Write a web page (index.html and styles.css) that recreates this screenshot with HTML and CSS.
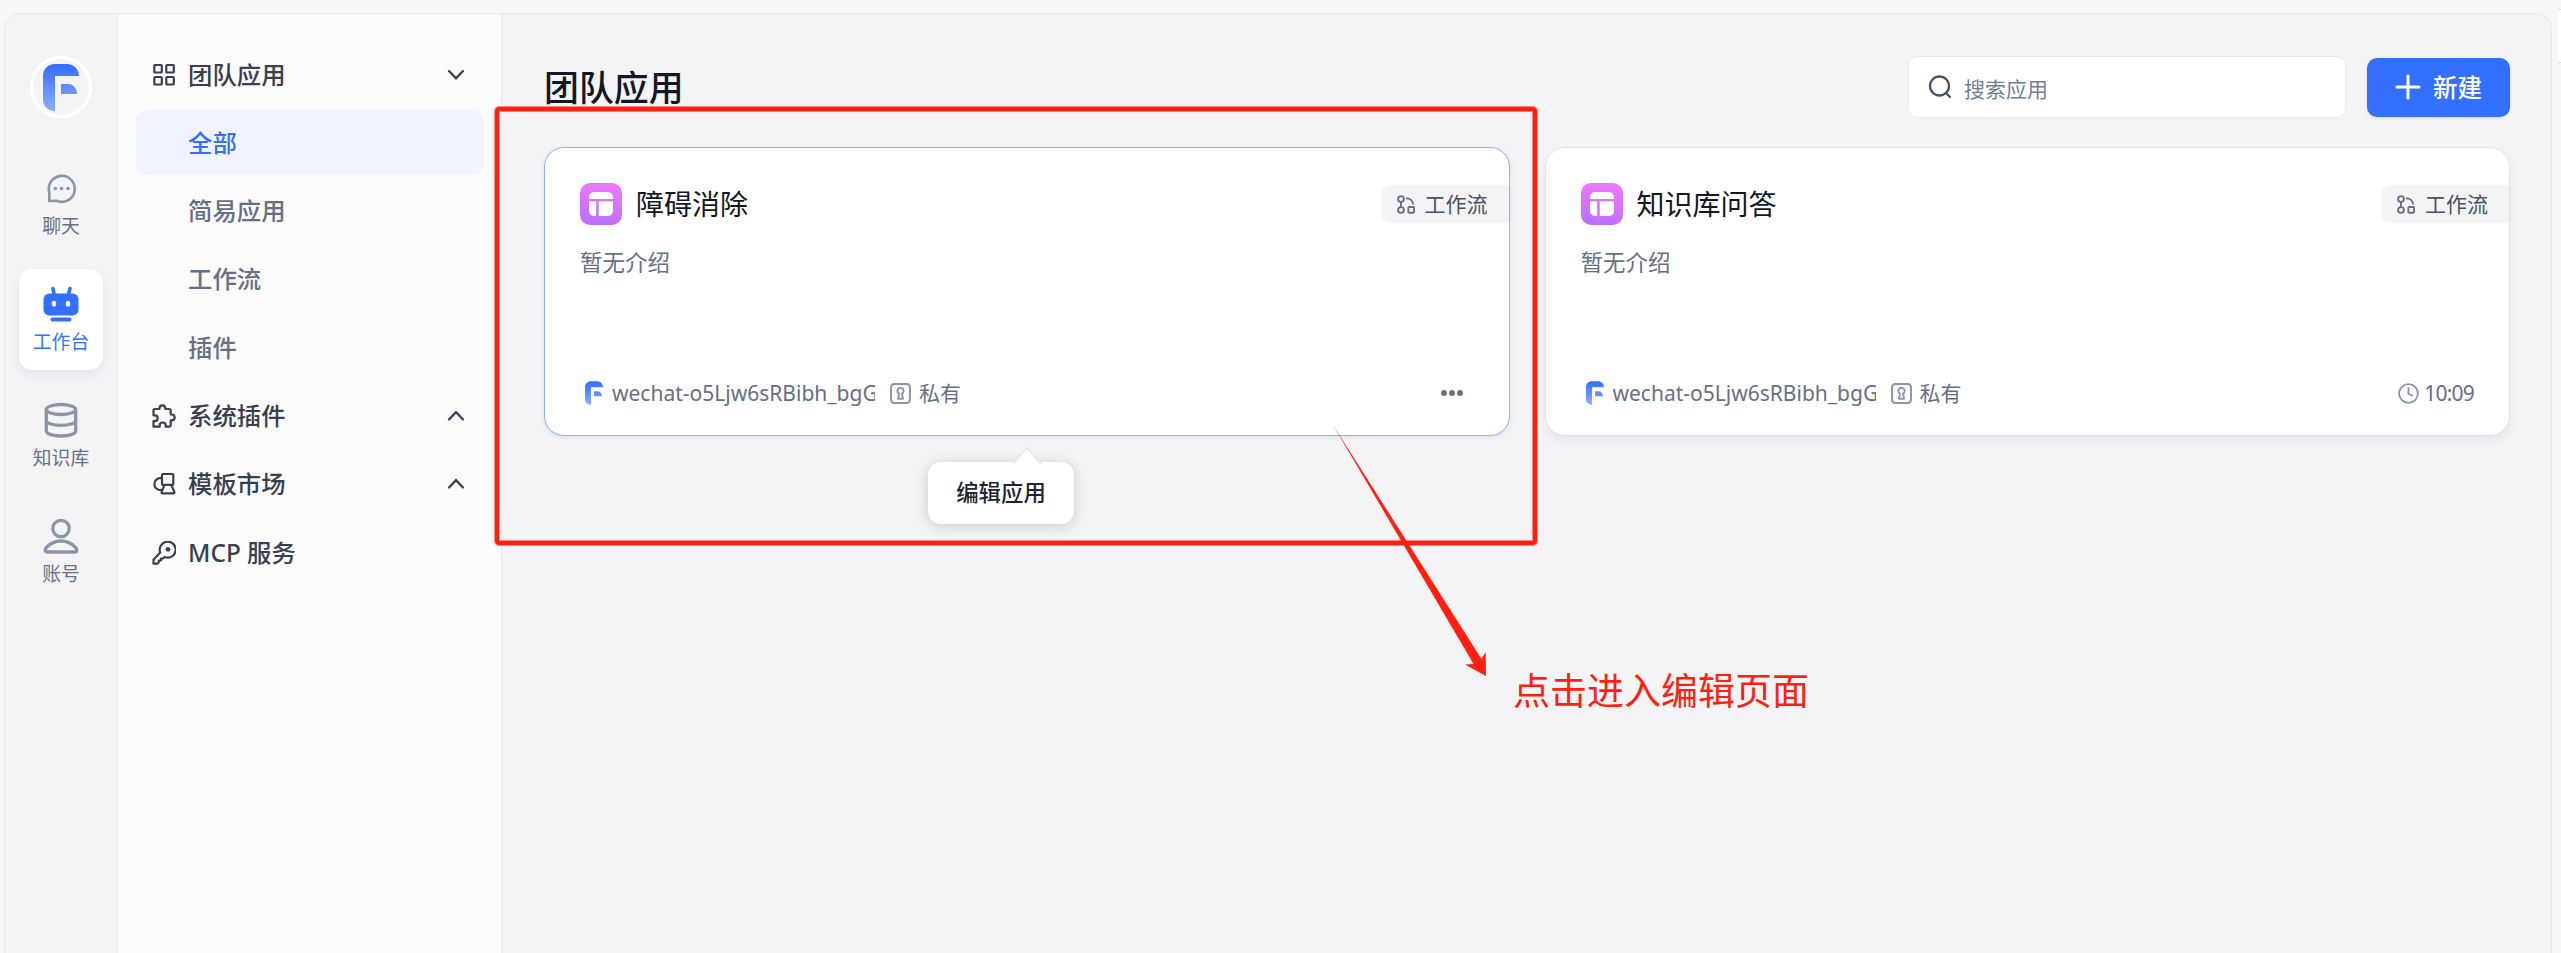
FILE: index.html
```html
<!DOCTYPE html>
<html lang="zh-CN">
<head>
  <meta charset="UTF-8">
  <title>团队应用</title>
  <link rel="stylesheet" href="styles.css">
</head>
<body>

  <!-- shared symbols -->
  <svg class="defs" width="0" height="0">
    <defs>
      <linearGradient id="blueGrad" x1="0" y1="0" x2="0" y2="1">
        <stop offset="0" stop-color="#326dff"/>
        <stop offset="1" stop-color="#8eaeff"/>
      </linearGradient>
      <linearGradient id="pinkGrad" x1="0.6" y1="0" x2="0.4" y2="1">
        <stop offset="0" stop-color="#ee78ff"/>
        <stop offset="1" stop-color="#bc70ff"/>
      </linearGradient>
    </defs>
    <symbol id="logo" viewBox="0 0 36 47">
      <path fill="url(#blueGrad)" d="M0 12C0 5 5 0 12 0H24C31 0 36 5 36 12H12V47C5 47 0 42 0 36ZM18 20H25C30 20 34 24 34 30H18Z"/>
    </symbol>
    <symbol id="flow" viewBox="0 0 18 19">
      <g fill="none" stroke="currentColor" stroke-width="1.9">
        <circle cx="4" cy="4" r="2.9"/>
        <circle cx="4" cy="15" r="2.9"/>
        <path d="M4 7V12M9 3.2C13 3.2 16 5.5 16 9.6"/>
        <rect x="11.3" y="12" width="5.8" height="5.8" rx="1"/>
      </g>
    </symbol>
    <symbol id="lock" viewBox="0 0 20 20">
      <rect x="1" y="1" width="18" height="18" rx="3" fill="none" stroke="currentColor" stroke-width="1.9"/>
      <path d="M8.6 10.2A3 3 0 1 1 11.4 10.2L12.4 15H7.6Z" fill="none" stroke="currentColor" stroke-width="1.8" stroke-linejoin="round"/>
    </symbol>
    <symbol id="appIcon" viewBox="0 0 42 42">
      <rect width="42" height="42" rx="10" fill="url(#pinkGrad)"/>
      <path fill="#fff" d="M9 16V14.5C9 11.2 11.2 9 14.5 9H27.5C30.8 9 33 11.2 33 14.5V16ZM9 18.2H16.2V33H14.5C11.2 33 9 30.8 9 27.5ZM18.7 18.2H33V27.5C33 30.8 30.8 33 27.5 33H18.7Z"/>
    </symbol>
  </svg>

  <div class="layout">
    <nav class="rail">
      <div class="avatar"><svg width="36" height="47"><use href="#logo"/></svg></div>

      <div class="rail-item">
        <svg width="36" height="36" viewBox="0 0 36 36">
          <path d="M6.3 31V22.5A13 13 0 1 1 13.5 30.7Z" fill="none" stroke="#8a95a7" stroke-width="2.6" stroke-linejoin="round"/>
          <g fill="#8a95a7"><circle cx="12.3" cy="18.5" r="1.8"/><circle cx="18.5" cy="18.5" r="1.8"/><circle cx="25" cy="18.5" r="1.8"/></g>
        </svg>
        <span>聊天</span>
      </div>

      <div class="rail-item active">
        <svg width="36" height="36" viewBox="0 0 36 36">
          <g fill="#3370ff">
            <rect x="0.5" y="7.5" width="35" height="22" rx="6"/>
            <rect x="7.5" y="31.5" width="21" height="4" rx="1.8"/>
          </g>
          <path d="M10 2.500L11 8M27 2.500L25.500 8" stroke="#3370ff" stroke-width="3.6" stroke-linecap="round"/>
          <g fill="#fff"><ellipse cx="11" cy="17.7" rx="2.2" ry="3"/><ellipse cx="25" cy="17.7" rx="2.2" ry="3"/></g>
        </svg>
        <span>工作台</span>
      </div>

      <div class="rail-item">
        <svg width="36" height="36" viewBox="0 0 36 36">
          <g fill="none" stroke="#8a95a7" stroke-width="3.3">
            <ellipse cx="18" cy="7.5" rx="14.7" ry="5"/>
            <path d="M3.3 7.5V29C3.3 32 9.9 34 18 34S32.7 32 32.7 29V7.5M3.3 18.5C3.3 21.300 9.900 23.300 18 23.300S32.700 21.300 32.700 18.500"/>
          </g>
        </svg>
        <span>知识库</span>
      </div>

      <div class="rail-item">
        <svg width="36" height="36" viewBox="0 0 36 36">
          <g fill="none" stroke="#8a95a7" stroke-width="3.3">
            <circle cx="18" cy="10.5" r="8.2"/>
            <path d="M4 34C1.5 34 2 31 3.5 29.3C7.5 25.2 12.5 23 18 23S28.5 25.2 32.5 29.3C34 31 34.5 34 32 34Z" stroke-linejoin="round"/>
          </g>
        </svg>
        <span>账号</span>
      </div>
    </nav>

    <aside class="menu">
      <div class="menu-item">
        <svg class="menu-icon" viewBox="0 0 24 24">
          <g fill="none" stroke="currentColor" stroke-width="2.2">
            <rect x="2.3" y="2" width="7.5" height="7.5" rx="0.8"/><rect x="14.3" y="2" width="7.5" height="7.5" rx="0.8"/>
            <rect x="2.3" y="14" width="7.5" height="7.5" rx="0.8"/><rect x="14.3" y="14" width="7.5" height="7.5" rx="0.8"/>
          </g>
        </svg>
        <span>团队应用</span>
        <svg class="chevron" viewBox="0 0 18 12"><path d="M2 2L9 9.3L16 2"/></svg>
      </div>
      <div class="menu-item sub selected"><span>全部</span></div>
      <div class="menu-item sub"><span>简易应用</span></div>
      <div class="menu-item sub"><span>工作流</span></div>
      <div class="menu-item sub"><span>插件</span></div>
      <div class="menu-item">
        <svg class="menu-icon" viewBox="0 0 24 24">
          <path d="M1.5 6.5Q1.500 5 3 5H7.500V4.200A2.900 2.900 0 0 1 13.300 4.200V5H17Q18.700 5 18.700 6.700V10.500H19.700A2.900 2.900 0 0 1 19.700 16.300H18.700V21Q18.700 22.700 17 22.700H13.700V21.500A3 3 0 0 0 7.700 21.500V22.700H1.500V17H2.800A2.700 2.700 0 0 0 2.800 11.300H1.500Z" fill="none" stroke="currentColor" stroke-width="2.2" stroke-linejoin="round"/>
        </svg>
        <span>系统插件</span>
        <svg class="chevron" viewBox="0 0 18 12"><path d="M2 9.500L9 2.200L16 9.500"/></svg>
      </div>
      <div class="menu-item">
        <svg class="menu-icon" viewBox="0 0 24 24">
          <g fill="none" stroke="currentColor" stroke-width="2.2" stroke-linejoin="round">
            <rect x="10" y="2" width="11.3" height="10.8" rx="0.8"/>
            <path d="M9.5 6.300A5.900 5.900 0 1 0 10.500 17.500M12.500 12.800L9.700 19.800Q9.300 21.300 10.500 21.300H21.500Q22.700 21.300 22.300 19.800L19.200 12.800"/>
          </g>
        </svg>
        <span>模板市场</span>
        <svg class="chevron" viewBox="0 0 18 12"><path d="M2 9.500L9 2.200L16 9.500"/></svg>
      </div>
      <div class="menu-item">
        <svg class="menu-icon" viewBox="0 0 24 24">
          <path d="M8.2 11.500A8 8 0 1 1 12.500 16L11 17.500H9V19.500H6.800V21.300L5.300 22.700H1.500V18.700Z" fill="none" stroke="currentColor" stroke-width="2.2" stroke-linejoin="round"/>
          <circle cx="16" cy="8.3" r="2.4" fill="currentColor"/>
        </svg>
        <span>MCP 服务</span>
      </div>
    </aside>

    <main class="content">
      <header class="topbar">
        <h1>团队应用</h1>
        <div class="search">
          <svg width="24" height="24" viewBox="0 0 24 24"><path d="M18 18L22 22M21 11A9.500 9.500 0 1 1 2 11A9.500 9.500 0 1 1 21 11Z" fill="none" stroke="#485264" stroke-width="2.3" stroke-linecap="round"/></svg>
          <span>搜索应用</span>
        </div>
        <button class="create">
          <svg width="26" height="26" viewBox="0 0 26 26"><path d="M13 2V24M2 13H24" stroke="#fff" stroke-width="3" stroke-linecap="round"/></svg>
          <span>新建</span>
        </button>
      </header>

      <div class="cards">
        <div class="card hover">
          <div class="card-head">
            <svg width="42" height="42"><use href="#appIcon"/></svg>
            <span class="name">障碍消除</span>
            <span class="tag"><svg width="18" height="19"><use href="#flow"/></svg><span>工作流</span></span>
          </div>
          <p class="intro">暂无介绍</p>
          <div class="card-foot">
            <svg class="owner-logo" width="18" height="24"><use href="#logo"/></svg>
            <span class="owner">wechat-o5Ljw6sRBibh_bgG</span>
            <svg class="lock" width="21" height="21"><use href="#lock"/></svg>
            <span class="scope">私有</span>
            <svg class="more" width="24" height="8" viewBox="0 0 24 8"><g fill="#667085"><circle cx="4" cy="4" r="2.9"/><circle cx="12" cy="4" r="2.9"/><circle cx="20" cy="4" r="2.9"/></g></svg>
          </div>
          <div class="tooltip">编辑应用
            <svg class="tooltip-arrow" width="28" height="17" viewBox="0 0 28 17"><path d="M0 17L14 1L28 17" fill="#fff" stroke="#e6e6e9" stroke-width="1.5"/></svg>
          </div>
        </div>

        <div class="card">
          <div class="card-head">
            <svg width="42" height="42"><use href="#appIcon"/></svg>
            <span class="name">知识库问答</span>
            <span class="tag"><svg width="18" height="19"><use href="#flow"/></svg><span>工作流</span></span>
          </div>
          <p class="intro">暂无介绍</p>
          <div class="card-foot">
            <svg class="owner-logo" width="18" height="24"><use href="#logo"/></svg>
            <span class="owner">wechat-o5Ljw6sRBibh_bgG</span>
            <svg class="lock" width="21" height="21"><use href="#lock"/></svg>
            <span class="scope">私有</span>
            <span class="time">
              <svg width="21" height="21" viewBox="0 0 21 21"><path d="M10.500 5V11L14.300 12.700" fill="none" stroke="#8a95a7" stroke-width="1.9" stroke-linecap="round"/><circle cx="10.5" cy="10.5" r="9.4" fill="none" stroke="#8a95a7" stroke-width="1.9"/></svg>
              10:09
            </span>
          </div>
        </div>
      </div>
    </main>
  </div>

  <div class="edge"></div>

  <!-- red marks over the page -->
  <div class="mark-box"></div>
  <svg class="mark-arrow" width="160" height="256" viewBox="0 0 160 256">
    <path fill="#ff1f10" d="M3 0L151.4 233.7L155.7 227L156 251L135 239.5L143.6 239Z"/>
  </svg>
  <div class="mark-text">点击进入编辑页面</div>

</body>
</html>
```
FILE: styles.css
```css
* {
  box-sizing: border-box;
}
body {
  margin: 0;
  height: 953px;
  overflow: hidden;
  position: relative;
  background: #f7f7f7;
  font-family: "Noto Sans", "Noto Sans CJK SC", sans-serif;
  color: #111824;
}
svg {
  display: block;
  flex-shrink: 0;
}
.defs {
  position: absolute;
}
.layout {
  display: flex;
  height: 960px;
  margin: 13px 9px 0 4px;
  border: 1px solid #e8e9eb;
  border-radius: 16px 16px 0 0;
  background: #f4f4f7;
  overflow: hidden;
}

/* left rail */
.rail {
  width: 113px;
  padding-top: 42px;
  border-right: 1px solid #e8eaee;
  display: flex;
  flex-direction: column;
  align-items: center;
  gap: 15px;
}
.avatar {
  width: 62px;
  height: 62px;
  margin-bottom: 20px;
  border: 3px solid #fff;
  border-radius: 50%;
  display: flex;
  justify-content: center;
  align-items: center;
}
.rail-item {
  width: 84px;
  height: 101px;
  padding-top: 17px;
  border-radius: 14px;
  display: flex;
  flex-direction: column;
  align-items: center;
  font-size: 18.8px;
  line-height: 24px;
  color: #667085;
  gap: 8px;
}
.rail-item.active {
  background: #fff;
  color: #3370ff;
  box-shadow: 0 4px 10px rgba(19, 51, 107, 0.08);
}

/* app menu */
.menu {
  width: 384px;
  padding: 28px 17px 0 18px;
  background: #fbfbfc;
  border-right: 1px solid #e8ebf0;
  display: flex;
  flex-direction: column;
  gap: 3.3px;
}
.menu-item {
  height: 65px;
  padding: 0 19px 0 16px;
  border-radius: 12px;
  display: flex;
  align-items: center;
  font-size: 24.4px;
  font-weight: 500;
  color: #383f50;
}
.menu-item span {
  margin-bottom: 3px;
}
.menu-icon {
  width: 24px;
  height: 24px;
  margin-right: 12px;
}
.menu-item.sub {
  padding-left: 52px;
  color: #667085;
}
.menu-item.selected {
  background: #f0f4ff;
  color: #3370ff;
}
.chevron {
  width: 18px;
  height: 12px;
  margin-left: auto;
  fill: none;
  stroke: #383f50;
  stroke-width: 2.3;
  stroke-linecap: round;
}

/* content */
.content {
  flex: 1;
  padding: 42px 41px 0 42px;
}
.topbar {
  display: flex;
  align-items: center;
  height: 62px;
  margin-bottom: 29px;
}
h1 {
  margin: 0 auto 3px 0;
  font-size: 34.9px;
  font-weight: 500;
}
.search {
  width: 438px;
  height: 62px;
  margin-right: 21px;
  padding-left: 19px;
  border: 1px solid #e8ebf0;
  border-radius: 10px;
  background: #fff;
  display: flex;
  align-items: center;
  gap: 12px;
  font-size: 21px;
  color: #717d96;
}
.search span {
  margin-top: 2px;
}
.create {
  width: 143px;
  height: 59px;
  padding: 0;
  border: none;
  border-radius: 10px;
  background: #3370ff;
  color: #fff;
  display: flex;
  justify-content: center;
  align-items: center;
  gap: 12px;
  font-family: inherit;
  font-size: 24.5px;
  font-weight: 500;
  box-shadow: 0 1px 3px rgba(19, 51, 107, 0.12);
}
.create span {
  margin-bottom: 1px;
}
.cards {
  display: grid;
  grid-template-columns: 1fr 1fr;
  gap: 35px;
}
.card {
  position: relative;
  height: 289px;
  padding: 35px 0 0 35px;
  border: 1px solid #dfe2ea;
  border-radius: 20px;
  background: #fff;
  box-shadow: 0 5px 10px rgba(19, 51, 107, 0.07);
}
.card.hover {
  border-color: #8fb1ff;
  box-shadow: 0 1px 4px rgba(19, 51, 107, 0.12);
}
.card-head {
  display: flex;
  align-items: center;
  height: 42px;
}
.name {
  margin: 0 0 2px 14px;
  font-size: 28px;
}
.tag {
  width: 128px;
  height: 38px;
  margin-left: auto;
  padding-left: 16px;
  border-radius: 9px 0 0 9px;
  background: #f4f4f7;
  color: #485264;
  display: flex;
  align-items: center;
  gap: 10px;
  font-size: 21px;
}
.tag span {
  margin-bottom: 2px;
}
.tag svg {
  color: #667085;
}
.intro {
  height: 32px;
  margin: 22px 0 96px;
  font-size: 22.5px;
  line-height: 32px;
  color: #667085;
}
.card-foot {
  display: flex;
  align-items: center;
  height: 36px;
  padding: 0 35px 0 5px;
  font-size: 21px;
  color: #667085;
}
.owner {
  width: 263px;
  margin: 0 15px 0 9px;
  overflow: hidden;
  white-space: nowrap;
}
.lock {
  margin-right: 8px;
  color: #8a95a7;
}
.scope {
  margin-bottom: 2px;
}
.more {
  margin: 0 10px 0 auto;
}
.time {
  margin-left: auto;
  display: flex;
  align-items: center;
  gap: 5px;
  letter-spacing: -0.8px;
}
.tooltip {
  position: absolute;
  left: 383px;
  top: 314px;
  width: 146px;
  height: 62px;
  border-radius: 13px;
  background: #fff;
  box-shadow: 0 2px 14px rgba(0, 0, 0, 0.17);
  color: #1d2532;
  font-size: 22.4px;
  font-weight: 500;
  line-height: 61px;
  text-align: center;
}
.tooltip-arrow {
  position: absolute;
  left: 85px;
  top: -15px;
}
.edge {
  position: absolute;
  right: 0;
  top: 9px;
  width: 3px;
  height: 54px;
  background: #fff;
  border: 1px solid #dcdcdc;
  border-width: 1px 0;
}

/* marks */
.mark-box {
  position: absolute;
  left: 495px;
  top: 107px;
  width: 1042px;
  height: 438px;
  border: solid #ff1f10;
  border-width: 4px;
  border-radius: 4px;
  box-shadow: 0 0 0 1px rgba(255, 31, 16, 0.5), inset 0 0 0 1px rgba(255, 31, 16, 0.5);
}
.mark-arrow {
  position: absolute;
  left: 1330px;
  top: 425px;
}
.mark-text {
  position: absolute;
  left: 1513px;
  top: 664px;
  font-size: 37px;
  line-height: 54px;
  color: #ff1f10;
  white-space: nowrap;
}
```
